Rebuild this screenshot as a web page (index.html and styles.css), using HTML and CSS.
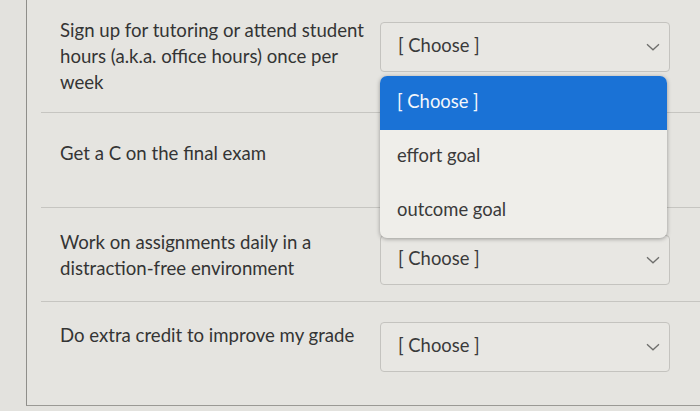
FILE: index.html
```html
<!DOCTYPE html>
<html>
<head>
<meta charset="utf-8">
<link rel="stylesheet" href="styles.css">
</head>
<body>
<div class="panel">
  <div class="row row1">
    <div class="label">Sign up for tutoring or attend student hours (a.k.a. office hours) once per week</div>
    <div class="select-wrap">
      <div class="select">
        <span>[ Choose ]</span>
        <svg class="chev" width="14" height="8" viewBox="0 0 14 8"><path d="M1 1.2 L7 6.8 L13 1.2" fill="none" stroke="#6e6e6c" stroke-width="1.3"/></svg>
      </div>
      <ul class="menu">
        <li class="active">[ Choose ]</li>
        <li>effort goal</li>
        <li>outcome goal</li>
      </ul>
    </div>
  </div>
  <div class="row row2">
    <div class="label">Get a C on the final exam</div>
    <div class="select-wrap"></div>
  </div>
  <div class="row row3">
    <div class="label">Work on assignments daily in a distraction-free environment</div>
    <div class="select-wrap">
      <div class="select">
        <span>[ Choose ]</span>
        <svg class="chev" width="14" height="8" viewBox="0 0 14 8"><path d="M1 1.2 L7 6.8 L13 1.2" fill="none" stroke="#6e6e6c" stroke-width="1.3"/></svg>
      </div>
    </div>
  </div>
  <div class="row row4">
    <div class="label">Do extra credit to improve my grade</div>
    <div class="select-wrap">
      <div class="select">
        <span>[ Choose ]</span>
        <svg class="chev" width="14" height="8" viewBox="0 0 14 8"><path d="M1 1.2 L7 6.8 L13 1.2" fill="none" stroke="#6e6e6c" stroke-width="1.3"/></svg>
      </div>
    </div>
  </div>
</div>
</body>
</html>
```
FILE: styles.css
```css
* { box-sizing: border-box; }
html, body {
  margin: 0;
  height: 100%;
  background: #e3e2de;
  overflow: hidden;
}
body {
  font-family: Lato, "Open Sans", sans-serif;
  color: #353535;
}
.panel {
  margin-left: 26px;
  height: 406px;
  border-left: 1px solid #8f8e8a;
  border-bottom: 1px solid #9a9995;
  background: #e5e4e0;
}
.row {
  margin-left: 14px;
  display: grid;
  grid-template-columns: 320px 290px;
  border-bottom: 1px solid #c6c5c1;
  padding-left: 19px;
}
.row4 { border-bottom: none; }
.label {
  font-size: 18.6px;
  line-height: 26px;
  color: #343434;
  padding-right: 2px;
}
.row1 { padding-top: 17px; padding-bottom: 17px; }
.row2 { padding-top: 27px; padding-bottom: 41px; }
.row3 { padding-top: 21px; padding-bottom: 16px; }
.row4 { padding-top: 20px; }
.select-wrap { position: relative; }
.select {
  height: 50px;
  border: 1px solid #c4c3bf;
  border-radius: 4px;
  background: #e8e7e3;
  display: flex;
  align-items: center;
  justify-content: space-between;
  padding: 0 9px 0 17px;
  font-size: 18.4px;
  color: #3a3a3a;
}
.row1 .select { margin-top: 5px; }
.row3 .select { margin-top: 6px; }
.row4 .select { margin-top: 0; }
.select span { position: relative; top: -2px; }
.menu {
  position: absolute;
  top: 59px;
  left: 0;
  width: 287px;
  margin: 0;
  padding: 0;
  list-style: none;
  background: #efeeea;
  border-radius: 7px;
  overflow: hidden;
  box-shadow: 0 1px 4px rgba(0,0,0,0.35);
  z-index: 5;
}
.menu li {
  height: 54px;
  line-height: 50px;
  padding-left: 17px;
  font-size: 18.4px;
  color: #3a3a3a;
}
.menu li.active {
  background: #1a72d6;
  color: #f4f7fb;
}
```
